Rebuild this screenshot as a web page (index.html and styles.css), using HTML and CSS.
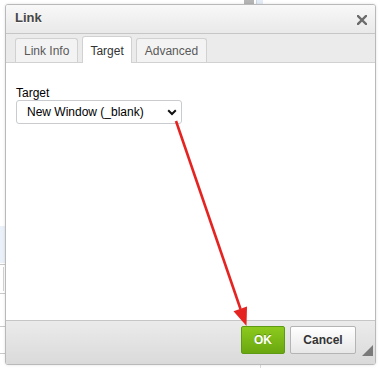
FILE: index.html
```html
<!DOCTYPE html>
<html>
<head>
<meta charset="utf-8">
<link rel="stylesheet" href="styles.css">
</head>
<body>
<div class="backdrop">
  <div class="bg-top-gray"></div>
  <div class="bg-top-blue"></div>
  <div class="bg-left-blue"></div>
  <div class="bg-hline l1"></div>
  <div class="bg-hline l2"></div>
  <div class="bg-hline l3"></div>
  <div class="bg-hline l4"></div>
  <div class="bg-vline"></div>
  <div class="bg-bottom-line"></div>
</div>

<div class="dialog">
  <div class="title">
    <span class="title-text">Link</span>
    <svg class="close" width="10" height="10" viewBox="0 0 10 10"><path d="M1 1 L9 9 M9 1 L1 9" stroke="#6b6b6b" stroke-width="2.4" stroke-linecap="square"/></svg>
  </div>
  <div class="tabs">
    <div class="tab">Link Info</div>
    <div class="tab active">Target</div>
    <div class="tab">Advanced</div>
  </div>
  <div class="content">
    <div class="label">Target</div>
    <div class="select">
      <span>New Window (_blank)</span>
      <svg class="chev" width="10" height="7" viewBox="0 0 10 7"><path d="M1.2 1.3 L5 5 L8.8 1.3" fill="none" stroke="#111" stroke-width="2"/></svg>
    </div>
  </div>
  <div class="footer">
    <div class="btn ok">OK</div>
    <div class="btn cancel">Cancel</div>
    <svg class="grip" width="11" height="11" viewBox="0 0 11 11"><path d="M11 0 L11 11 L0 11 Z" fill="#7a7a7a"/></svg>
  </div>
</div>

<svg class="arrow" width="382" height="368" viewBox="0 0 382 368">
  <line x1="176" y1="121" x2="240.5" y2="309" stroke="#e52320" stroke-width="2.6"/>
  <polygon points="246.5,326 247,306.5 233.5,311.3" fill="#e52320"/>
</svg>
</body>
</html>
```

FILE: styles.css
```css
html, body {
  margin: 0;
  padding: 0;
  background: #fff;
}
body {
  width: 382px;
  height: 368px;
  position: relative;
  overflow: hidden;
  font-family: "Liberation Sans", Arial, sans-serif;
  padding-top: 4px;
  padding-left: 5px;
  box-sizing: border-box;
}

.backdrop div { position: absolute; }
.bg-top-gray { left: 244px; top: 0; width: 10px; height: 4px; background: #b5b5b5; }
.bg-top-blue { left: 256px; top: 0; width: 6px; height: 4px; background: #e4edf7; border-left: 1px solid #cfd9e4; }
.bg-left-blue { left: 0; top: 226px; width: 5px; height: 37px; background: #eaf1f8; }
.bg-hline { left: 0; width: 5px; height: 1px; background: #c9c9c9; }
.bg-hline.l1 { top: 264px; }
.bg-hline.l2 { top: 293px; }
.bg-hline.l3 { top: 326px; }
.bg-hline.l4 { top: 353px; }
.bg-vline { left: 3px; top: 267px; width: 1px; height: 24px; background: #d4d4d4; }
.bg-bottom-line { left: 260px; top: 365px; width: 1px; height: 3px; background: #dcdcdc; }

.dialog {
  position: relative;
  z-index: 1;
  width: 371px;
  height: 361px;
  box-sizing: border-box;
  border: 1px solid #b9b9b9;
  border-radius: 3px;
  background: #fff;
  box-shadow: 0 0 3px rgba(0,0,0,0.12);
  display: flex;
  flex-direction: column;
  overflow: hidden;
}

.title {
  height: 28px;
  flex: none;
  border-bottom: 1px solid #c6c6c6;
  background: linear-gradient(#f8f8f8, #e9e9e9);
  display: flex;
  align-items: flex-start;
  justify-content: space-between;
  padding: 0 8px 0 9px;
}
.title-text {
  font-size: 13px;
  font-weight: bold;
  color: #474747;
  line-height: 25px;
  text-shadow: 0 1px 0 rgba(255,255,255,0.75);
}
.close { margin-top: 10px; }

.tabs {
  height: 28px;
  flex: none;
  border-bottom: 1px solid #d1d1d1;
  background: #ebebeb;
  display: flex;
  align-items: flex-end;
  gap: 4px;
  padding-left: 9px;
}
.tab {
  font-size: 12px;
  color: #595959;
  border: 1px solid #d1d1d1;
  border-bottom: none;
  border-radius: 3px 3px 0 0;
  background: #f3f3f3;
  padding: 2px 8px 0;
  height: 21px;
  line-height: 21px;
}
.tab.active {
  background: #fff;
  color: #333;
  height: 24px;
  line-height: 24px;
  padding: 2px 7px 0;
  margin-bottom: -1px;
  position: relative;
}

.content {
  flex: 1;
  padding: 23px 10px 0;
}
.label {
  font-size: 12px;
  color: #000;
  line-height: 14px;
}
.select {
  width: 166px;
  height: 24px;
  box-sizing: border-box;
  border: 1px solid #c9cbce;
  border-radius: 3px;
  display: flex;
  align-items: center;
  justify-content: space-between;
  padding: 0 4px 0 10px;
  font-size: 12px;
  color: #000;
}
.chev { display: block; }

.footer {
  height: 38px;
  flex: none;
  border-top: 1px solid #c6c6c6;
  background: linear-gradient(#ebebeb, #dadada);
  display: flex;
  justify-content: flex-end;
  align-items: flex-start;
  gap: 5px;
  padding: 5px 19px 0 0;
  position: relative;
}
.btn {
  height: 28px;
  box-sizing: border-box;
  border-radius: 2px;
  font-size: 12px;
  font-weight: bold;
  display: flex;
  align-items: center;
  justify-content: center;
}
.btn.ok {
  width: 44px;
  color: #fff;
  border: 1px solid #5e9a14;
  background: linear-gradient(#8cca1e, #6aa710);
  text-shadow: 0 -1px 0 rgba(60,100,10,0.5);
}
.btn.cancel {
  width: 66px;
  color: #333;
  border: 1px solid #b4b4b4;
  background: linear-gradient(#ffffff, #e7e7e7);
}
.grip {
  position: absolute;
  right: 2px;
  bottom: 8px;
}

.arrow {
  position: absolute;
  left: 0;
  top: 0;
  z-index: 2;
  pointer-events: none;
}
```
